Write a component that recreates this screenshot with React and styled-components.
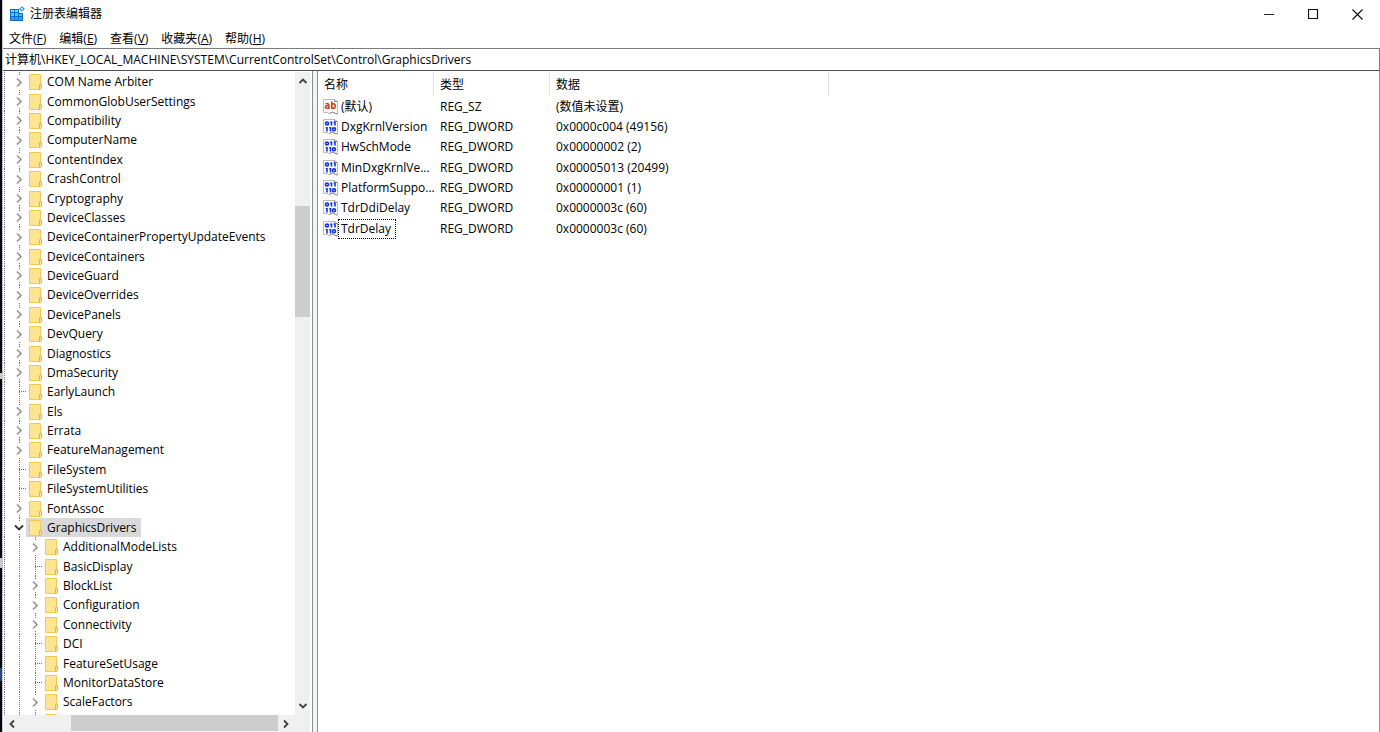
import React, { useState } from 'react'
import styled, { createGlobalStyle, css } from 'styled-components'

const dots = 'repeating-linear-gradient(#747474 0 1px, transparent 1px 2px)'
const dotsAcross = 'repeating-linear-gradient(90deg, #747474 0 1px, transparent 1px 2px)'

const GlobalStyle = createGlobalStyle`
  * {
    box-sizing: border-box;
  }

  body {
    margin: 0;
    overflow: hidden;
    background: #fff;
  }

  body, button, input, table {
    font-family: 'Open Sans', 'Noto Sans CJK SC', sans-serif;
    font-size: 12px;
    line-height: 18px;
    color: #000;
  }

  button {
    padding: 0;
    border: 0;
    background: none;
  }
`

const Desktop = styled.div`
  height: 100vh;
  padding-left: 2px;
  background: linear-gradient(
    #05060f 373px,
    #c8c8cc 373px 379px,
    #05060f 379px 558px,
    #c8c8cc 558px 568px,
    #05060f 568px 668px,
    #234a78 668px 681px,
    #05060f 681px
  );
`

const Window = styled.div`
  display: flex;
  flex-direction: column;
  height: 100%;
  background: #fff;
  border-left: 1px solid #c4c4cc;
`

const TitleBar = styled.header`
  display: flex;
  align-items: center;
  height: 28px;
  padding: 0 1px 0 6px;
`

const Title = styled.h1`
  flex: 1;
  margin: 0 0 0 5px;
  font-size: 12px;
  font-weight: 400;
`

const WindowButton = styled.button`
  display: flex;
  align-items: center;
  justify-content: center;
  width: 44px;
  height: 28px;
`

const MenuBar = styled.nav`
  display: flex;
  gap: 13px;
  height: 20px;
  padding: 1px 0 0 6px;
`

const MenuButton = styled.button`
  height: 20px;
`

const AddressBar = styled.input`
  width: 100%;
  height: 23px;
  padding: 0 2px 2px;
  border: 1px solid #7c7c80;
  border-width: 1px 1px 1px 0;
  border-bottom-color: #4c4c54;
  outline: none;
`

const Panes = styled.main`
  flex: 1;
  display: flex;
  min-height: 0;
`

const TreePane = styled.section`
  display: flex;
  flex-direction: column;
  width: 310px;
  padding: 1px 2px 0 1px;
  border-right: 1px solid #8a8e98;
`

const TreeArea = styled.div`
  flex: 1;
  display: flex;
  min-height: 0;
`

const Tree = styled.ul`
  flex: 1;
  min-width: 0;
  margin: 0;
  padding: 0;
  overflow: hidden;
  list-style: none;
`

const TreeRow = styled.li`
  display: flex;
  height: 19px;

  &:nth-child(8n + 1),
  &:nth-child(8n + 4),
  &:nth-child(8n + 6) {
    height: 20px;
  }
`

const Guide = styled.span`
  flex: none;
  width: ${({ $root }) => ($root ? '7px' : '16px')};
  background: ${dots} ${({ $root }) => ($root ? '0' : '8px')} 0 / 1px 100% no-repeat;
`

const Joint = styled.span`
  flex: none;
  display: flex;
  align-items: center;
  width: 15px;
  background: ${dots} 8px 0 / 1px 100% no-repeat;

  ${({ $leaf }) =>
    $leaf &&
    css`
      background: ${dots} 8px 0 / 1px 100% no-repeat, ${dotsAcross} 8px 9px / 7px 1px no-repeat;
    `}

  svg {
    width: 15px;
    height: 13px;
    background: #fff;
  }
`

const KeyButton = styled.button`
  display: flex;
  align-items: center;
  gap: 5px;
  padding: 0 4px 0 3px;
  white-space: nowrap;
  background: ${({ $selected }) => ($selected ? '#d9d9d9' : 'transparent')};
`

const VerticalBar = styled.div`
  flex: none;
  display: flex;
  flex-direction: column;
  width: 15px;
  background: #f0f0f0;
`

const HorizontalBar = styled.div`
  display: flex;
  width: 289px;
  height: 17px;
  padding-bottom: 1px;
`

const BarFooter = styled.div`
  flex: none;
  background: #f0f0f0;
`

const ArrowButton = styled.button`
  flex: none;
  display: flex;
  align-items: center;
  justify-content: center;
  width: 15px;
  height: 18px;
`

const Track = styled.div`
  flex: ${({ $grow }) => $grow} 0 0;
`

const Thumb = styled.div`
  flex: ${({ $grow }) => $grow} 0 0;
  background: #cdcdcd;
`

const Splitter = styled.div`
  width: 5px;
  background: #f4f4f6;
  border-right: 1px solid #8a8e98;
`

const ValuePane = styled.section`
  flex: 1;
  min-width: 0;
  padding-top: 1px;
  border-right: 1px solid #8a8e98;
`

const ValueTable = styled.table`
  width: 511px;
  table-layout: fixed;
  border-collapse: separate;
  border-spacing: 0;
`

const ColumnHead = styled.th`
  width: ${({ $width }) => $width}px;
  height: 24px;
  padding: 1px 0 0 6px;
  font-weight: 400;
  text-align: left;
  border-right: 1px solid #e4e4e4;
`

const ValueRow = styled.tr`
  height: 20px;

  &:nth-child(3n + 1) {
    height: 21px;
  }
`

const ValueCell = styled.td`
  padding: 0 0 0 6px;
  white-space: nowrap;
`

const NameCell = styled.td`
  padding: 0 0 0 5px;
`

const NameBox = styled.div`
  display: flex;
  align-items: center;

  svg {
    flex: none;
  }
`

const NameText = styled.span`
  padding: 0 4px 0 2px;
  white-space: nowrap;
  outline: ${({ $focused }) => ($focused ? '1px dotted #000' : 'none')};
`

const AppIcon = () => (
  <svg width="16" height="16" viewBox="0 0 16 16">
    <path d="M1 3h9v4h4v8H1z" fill="#0a6fc4" />
    <path d="M2 4h3v2H2zM6 4h3v2H6z" fill="#7fdcff" />
    <path d="M2 7h3v3H2zM6 7h3v3H6zM10 8h3v2h-3z" fill="#4cc2fa" />
    <path d="M2 11h3v3H2zM6 11h3v3H6zM10 11h3v3h-3z" fill="#2aa4ee" />
    <path d="M13 .700L15.300 3 13 5.300 10.700 3z" fill="#9fe4ff" stroke="#0f78cc" />
  </svg>
)

const FolderIcon = () => (
  <svg width="13" height="16" viewBox="0 0 13 16">
    <path d="M.5.500h11v15H.5z" fill="#ffe494" stroke="#f0cb50" />
    <path d="M10.500 10.500h2v4l-1 1h-1z" fill="#ffe28a" stroke="#e8b828" />
  </svg>
)

const Chevron = ({ open }) => (
  <svg viewBox="0 0 15 13" fill="none">
    {open ? (
      <path d="M4 4.500l4 4 4-4" stroke="#333" strokeWidth="1.800" />
    ) : (
      <path d="M6 2.500l4 4-4 4" stroke="#969696" strokeWidth="1.700" />
    )}
  </svg>
)

const arrows = {
  up: 'M1.500 7l3.500-3.500L8.500 7',
  down: 'M1.500 3l3.500 3.500L8.500 3',
  left: 'M7 1.500L3.500 5 7 8.500',
  right: 'M3 1.500L6.500 5 3 8.500',
}

const Arrow = ({ direction }) => (
  <ArrowButton type="button" aria-label={direction}>
    <svg width="10" height="10" viewBox="0 0 10 10">
      <path d={arrows[direction]} fill="none" stroke="#404040" strokeWidth="1.800" />
    </svg>
  </ArrowButton>
)

const ValueIcon = ({ type }) => (
  <svg width="16" height="16" viewBox="0 0 16 16">
    <path d="M.5.500h11l3 2v12.500l-2-.5-3-1.500-3 1.500-2.500-1H.5z" fill="#fff" stroke="#bcbcbc" />
    <path d="M11.500.500v2h3M6.500 14.500l3-1.500 3 1.500 2 .500" fill="none" stroke="#8c8c8c" />
    {type === 'REG_SZ' ? (
      <path
        d="M2.500 4.800h2q1.400 0 1.400 1.300V10M5.900 6.800H4q-1.600 0-1.600 1.300T4 9.300q1.900 0 1.900-1.300M8.800 2.500V10M8.800 6.500q.3-1.700 1.700-1.700 1.700 0 1.700 2.300t-1.700 2.300q-1.400 0-1.700-1.700"
        fill="none"
        stroke="#cc4420"
        strokeWidth="1.600"
      />
    ) : (
      <g fill="none" stroke="#1436e0" strokeWidth="1.600">
        <ellipse cx="4" cy="4.500" rx="1.500" ry="1.400" />
        <path d="M8.500 2.500v4M12 2.500v4M4 8v4.500M7.500 8v4.500" />
        <path d="M7 3.200h1.500M10.500 3.200H12M2.500 8.800H4M6 8.800h1.500" strokeWidth="1" />
        <ellipse cx="11" cy="10.300" rx="1.500" ry="1.400" />
      </g>
    )}
  </svg>
)

const menus = [
  ['文件', 'F'],
  ['编辑', 'E'],
  ['查看', 'V'],
  ['收藏夹', 'A'],
  ['帮助', 'H'],
]

const keys = [
  { name: 'COM Name Arbiter' },
  { name: 'CommonGlobUserSettings' },
  { name: 'Compatibility' },
  { name: 'ComputerName' },
  { name: 'ContentIndex' },
  { name: 'CrashControl' },
  { name: 'Cryptography' },
  { name: 'DeviceClasses' },
  { name: 'DeviceContainerPropertyUpdateEvents' },
  { name: 'DeviceContainers' },
  { name: 'DeviceGuard' },
  { name: 'DeviceOverrides' },
  { name: 'DevicePanels' },
  { name: 'DevQuery' },
  { name: 'Diagnostics' },
  { name: 'DmaSecurity' },
  { name: 'EarlyLaunch', leaf: true },
  { name: 'Els' },
  { name: 'Errata' },
  { name: 'FeatureManagement' },
  { name: 'FileSystem', leaf: true },
  { name: 'FileSystemUtilities', leaf: true },
  { name: 'FontAssoc' },
  { name: 'GraphicsDrivers', open: true },
  { name: 'AdditionalModeLists', child: true },
  { name: 'BasicDisplay', child: true, leaf: true },
  { name: 'BlockList', child: true },
  { name: 'Configuration', child: true },
  { name: 'Connectivity', child: true },
  { name: 'DCI', child: true, leaf: true },
  { name: 'FeatureSetUsage', child: true, leaf: true },
  { name: 'MonitorDataStore', child: true, leaf: true },
  { name: 'ScaleFactors', child: true },
  { name: '', child: true, leaf: true },
]

const values = [
  ['(默认)', 'REG_SZ', '(数值未设置)'],
  ['DxgKrnlVersion', 'REG_DWORD', '0x0000c004 (49156)'],
  ['HwSchMode', 'REG_DWORD', '0x00000002 (2)'],
  ['MinDxgKrnlVe...', 'REG_DWORD', '0x00005013 (20499)'],
  ['PlatformSuppo...', 'REG_DWORD', '0x00000001 (1)'],
  ['TdrDdiDelay', 'REG_DWORD', '0x0000003c (60)'],
  ['TdrDelay', 'REG_DWORD', '0x0000003c (60)'],
]

const App = () => {
  const [selected, setSelected] = useState('GraphicsDrivers')
  const [address, setAddress] = useState(
    '计算机\\HKEY_LOCAL_MACHINE\\SYSTEM\\CurrentControlSet\\Control\\GraphicsDrivers'
  )

  return (
    <Desktop>
      <GlobalStyle />
      <Window>
        <TitleBar>
          <AppIcon />
          <Title>注册表编辑器</Title>
          <WindowButton type="button" aria-label="最小化">
            <svg width="11" height="11" viewBox="0 0 11 11">
              <path d="M0 5.500h10" stroke="#222" />
            </svg>
          </WindowButton>
          <WindowButton type="button" aria-label="最大化">
            <svg width="11" height="11" viewBox="0 0 11 11">
              <path d="M.5.500h9v9h-9z" fill="none" stroke="#111" strokeWidth="1.200" />
            </svg>
          </WindowButton>
          <WindowButton type="button" aria-label="关闭">
            <svg width="11" height="11" viewBox="0 0 11 11">
              <path d="M.5.500l10 10M10.500.500l-10 10" stroke="#111" strokeWidth="1.200" />
            </svg>
          </WindowButton>
        </TitleBar>
        <MenuBar>
          {menus.map(([label, letter]) => (
            <MenuButton type="button" key={letter}>
              {label}(<u>{letter}</u>)
            </MenuButton>
          ))}
        </MenuBar>
        <AddressBar aria-label="地址" value={address} onChange={(e) => setAddress(e.target.value)} />
        <Panes>
          <TreePane>
            <TreeArea>
              <Tree>
                {keys.map(({ name, child, leaf, open }) => (
                  <TreeRow key={name}>
                    <Guide $root />
                    {child && <Guide />}
                    <Joint $leaf={leaf}>{!leaf && <Chevron open={open} />}</Joint>
                    <KeyButton type="button" $selected={name === selected} onClick={() => setSelected(name)}>
                      <FolderIcon />
                      {name}
                    </KeyButton>
                  </TreeRow>
                ))}
              </Tree>
              <VerticalBar>
                <Arrow direction="up" />
                <Track $grow={116} />
                <Thumb $grow={111} />
                <Track $grow={380} />
                <Arrow direction="down" />
              </VerticalBar>
            </TreeArea>
            <BarFooter>
              <HorizontalBar>
                <Arrow direction="left" />
                <Track $grow={52} />
                <Thumb $grow={207} />
                <Arrow direction="right" />
              </HorizontalBar>
            </BarFooter>
          </TreePane>
          <Splitter />
          <ValuePane>
            <ValueTable>
              <thead>
                <tr>
                  <ColumnHead $width={116}>名称</ColumnHead>
                  <ColumnHead $width={116}>类型</ColumnHead>
                  <ColumnHead $width={279}>数据</ColumnHead>
                </tr>
              </thead>
              <tbody>
                {values.map(([name, type, data]) => (
                  <ValueRow key={name}>
                    <NameCell>
                      <NameBox>
                        <ValueIcon type={type} />
                        <NameText $focused={name === 'TdrDelay'}>{name}</NameText>
                      </NameBox>
                    </NameCell>
                    <ValueCell>{type}</ValueCell>
                    <ValueCell>{data}</ValueCell>
                  </ValueRow>
                ))}
              </tbody>
            </ValueTable>
          </ValuePane>
        </Panes>
      </Window>
    </Desktop>
  )
}

export default App
